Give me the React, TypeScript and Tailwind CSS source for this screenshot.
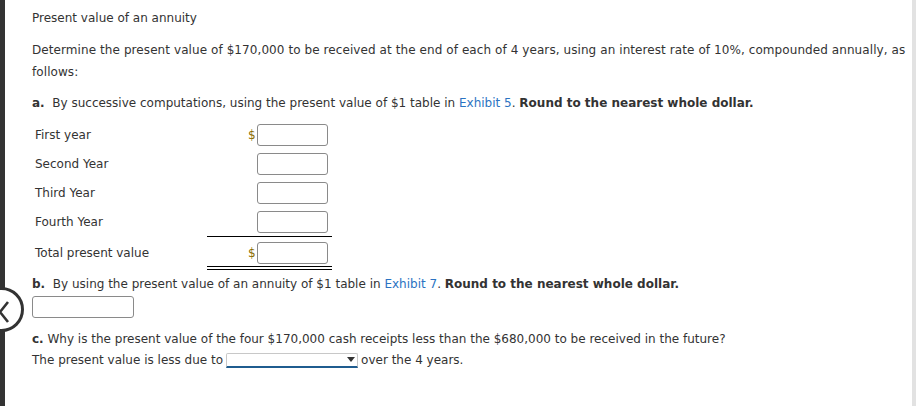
import type { ReactNode } from "react";

const ROWS = [
  { label: "First year", dollar: true },
  { label: "Second Year", dollar: false },
  { label: "Third Year", dollar: false },
  { label: "Fourth Year", dollar: false },
];

export default function App() {
  return (
    <div className="relative flex h-[406px] w-[916px] overflow-hidden bg-white text-[12px] text-[#333] [font-family:'DejaVu_Sans',Verdana,sans-serif]">
      <div className="w-[5px] shrink-0 bg-[#333]" />

      <div className="flex-1 pl-[27px] pt-[9px]">
        <p className="leading-[18px]">Present value of an annuity</p>

        <p className="mt-[12px] leading-[22px] tracking-[0.08px]">
          Determine the present value of $170,000 to be received at the end of each of 4 years, using an interest rate
          of 10%, compounded annually, as follows:
        </p>

        <p className="mt-[9px] leading-[22px]">
          <b>a.</b>&nbsp; By successive computations, using the present value of $1 table in{" "}
          <Link>Exhibit 5</Link>. <b>Round to the nearest whole dollar.</b>
        </p>

        <div className="mt-[6px] w-[300px]">
          {ROWS.map((r) => (
            <Row key={r.label} label={r.label} dollar={r.dollar} />
          ))}
          <div className="ml-[175px] h-px w-[125px] bg-black" />
          <Row label="Total present value" dollar className="mt-[3px] h-[25px]" />
          <div className="ml-[175px] mt-px h-[4px] w-[125px] border-y border-black" />
        </div>

        <p className="mt-[3px] leading-[22px]">
          <b>b.</b>&nbsp; By using the present value of an annuity of $1 table in <Link>Exhibit 7</Link>.{" "}
          <b>Round to the nearest whole dollar.</b>
        </p>
        <div className="mt-px h-[22px] w-[102px] rounded-[3px] border border-[#8a8a8a] bg-white" />

        <p className="mt-[10px] leading-[22px]">
          <b>c.</b> Why is the present value of the four $170,000 cash receipts less than the $680,000 to be received
          in the future?
        </p>
        <div className="flex items-center leading-[20px]">
          <span>The present value is less due to</span>
          <div className="relative ml-[3px] mr-[3px] h-[15px] w-[132px] rounded-t-[2px] border border-b-2 border-[#c8c8c8] border-b-[#1f5c8f] bg-white">
            <svg className="absolute right-[2px] top-[3px]" width="8" height="5" viewBox="0 0 8 5">
              <path d="M0 0h8L4 5z" fill="#333" />
            </svg>
          </div>
          <span>over the 4 years.</span>
        </div>
      </div>

      <div className="w-[4px] shrink-0 bg-[#e2e2e2]" />

      {/* back arrow circle over the left rail */}
      <div className="absolute left-[-21px] top-[287px] h-[45px] w-[45px] rounded-full border-[3px] border-[#333] bg-white" />
      <svg className="absolute left-[-2px] top-[300px]" width="12" height="24" viewBox="0 0 12 24">
        <path d="M10 2 2 12l8 10" fill="none" stroke="#333" strokeWidth="2.6" />
      </svg>
    </div>
  );
}

function Link({ children }: { children: ReactNode }) {
  return <span className="text-[#2b73c2]">{children}</span>;
}

function Row({ label, dollar, className = "h-[29px]" }: { label: string; dollar: boolean; className?: string }) {
  return (
    <div className={`flex items-center ${className}`}>
      <span className="w-[216px] pl-[3px]">{label}</span>
      <span className="w-[9px] text-[12px] text-[#8a6d00]">{dollar ? "$" : ""}</span>
      <div className="h-[22px] w-[71px] rounded-[3px] border border-[#8a8a8a] bg-white" />
    </div>
  );
}
